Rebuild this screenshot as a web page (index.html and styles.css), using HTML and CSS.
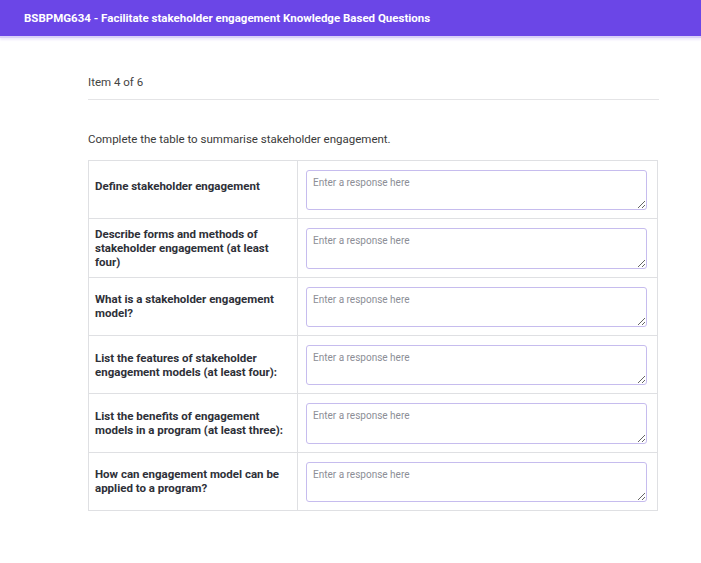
FILE: index.html
```html
<!DOCTYPE html>
<html lang="en">
<head>
<meta charset="utf-8">
<title>BSBPMG634 - Facilitate stakeholder engagement Knowledge Based Questions</title>
<link rel="stylesheet" href="styles.css">
</head>
<body>
<header class="topbar">
  <h1 class="topbar-title">BSBPMG634 - Facilitate stakeholder engagement Knowledge Based Questions</h1>
</header>
<main class="content">
  <div class="item-count">Item 4 of 6</div>
  <p class="intro">Complete the table to summarise stakeholder engagement.</p>
  <table class="qtable">
    <tbody>
      <tr>
        <td class="qlabel qlabel-single">Define stakeholder engagement</td>
        <td class="qanswer"><textarea class="response" placeholder="Enter a response here"></textarea></td>
      </tr>
      <tr>
        <td class="qlabel">Describe forms and methods of stakeholder engagement (at least four)</td>
        <td class="qanswer"><textarea class="response" placeholder="Enter a response here"></textarea></td>
      </tr>
      <tr>
        <td class="qlabel">What is a stakeholder engagement model?</td>
        <td class="qanswer"><textarea class="response" placeholder="Enter a response here"></textarea></td>
      </tr>
      <tr>
        <td class="qlabel">List the features of stakeholder engagement models (at least four):</td>
        <td class="qanswer"><textarea class="response" placeholder="Enter a response here"></textarea></td>
      </tr>
      <tr>
        <td class="qlabel">List the benefits of engagement models in a program (at least three):</td>
        <td class="qanswer"><textarea class="response" placeholder="Enter a response here"></textarea></td>
      </tr>
      <tr>
        <td class="qlabel">How can engagement model can be applied to a program?</td>
        <td class="qanswer"><textarea class="response" placeholder="Enter a response here"></textarea></td>
      </tr>
    </tbody>
  </table>
</main>
</body>
</html>
```
FILE: styles.css
```css
html, body {
  margin: 0;
  padding: 0;
  background: #ffffff;
  font-family: Roboto, "Liberation Sans", Arial, sans-serif;
}

.topbar {
  height: 36px;
  background: #6b46e7;
  display: flex;
  align-items: center;
  padding-left: 24px;
  box-shadow: 0 2px 0 #d9d0f8, 0 4px 2px #eeeafc;
}

.topbar-title {
  margin: 0;
  color: #ffffff;
  font-size: 11.5px;
  font-weight: 700;
}

.content {
  width: 571px;
  margin: 0 0 0 88px;
  padding-top: 39px;
}

.item-count {
  font-size: 11.5px;
  line-height: 14px;
  color: #444444;
  padding-bottom: 10px;
  border-bottom: 1px solid #e4e4e6;
}

.intro {
  margin: 32px 0 0;
  font-size: 11.5px;
  line-height: 14px;
  color: #3a3a3a;
}

.qtable {
  margin-top: 14px;
  width: 570px;
  border-collapse: collapse;
  table-layout: fixed;
}

.qtable td {
  border: 1px solid #dfe0e3;
  padding: 0;
}

.qlabel {
  width: 196px;
  padding: 0 6px !important;
  vertical-align: middle;
  font-size: 11.5px;
  line-height: 14px;
  font-weight: 700;
  color: #2e3038;
}

.qlabel-single {
  padding-bottom: 8px !important;
}

.qanswer {
  padding: 9px 10px 8px 8px !important;
  vertical-align: top;
}

.response {
  display: block;
  box-sizing: border-box;
  width: 341px;
  height: 40.34px;
  margin: 0;
  padding: 6px 6px;
  border: 1px solid #c6bcee;
  border-radius: 3px;
  font-family: Roboto, "Liberation Sans", Arial, sans-serif;
  font-size: 10px;
  line-height: 12px;
  color: #333333;
  background: #ffffff;
  resize: vertical;
}

.response::placeholder {
  color: #8c8e96;
}
```
